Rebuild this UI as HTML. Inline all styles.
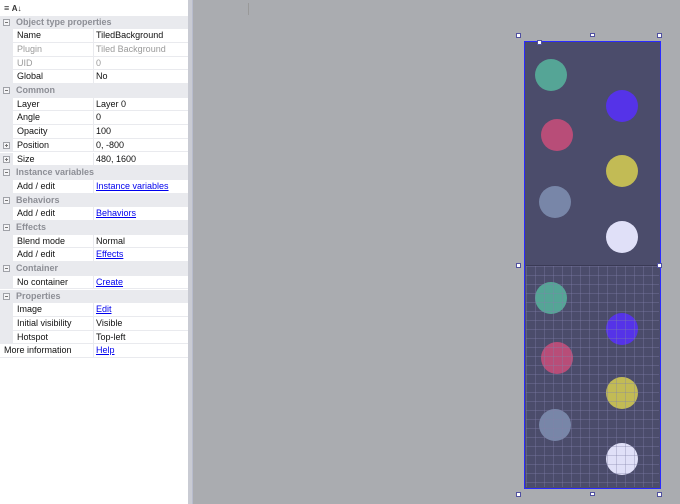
<!DOCTYPE html><html><head><style>
body{margin:0;width:680px;height:504px;overflow:hidden;background:#fff;font-family:"Liberation Sans",sans-serif;font-size:9px;position:relative}
#p{position:absolute;left:0;top:0;width:188px;height:504px;background:#fff}
.r{position:absolute;left:0;width:188px;height:13.7px;line-height:13.7px;box-sizing:border-box}
.h{background:#e9eaee;color:#8d8f96;font-weight:bold}
.h span{position:absolute;left:16px}
i{position:absolute;left:3px;top:3px;width:7px;height:7px;border:1px solid #a0a2a8;box-sizing:border-box;font-style:normal;z-index:2;background:#f4f4f6}
i:after{content:"";position:absolute;left:1px;top:2px;width:3px;height:1px;background:#777}
i.p:before{content:"";position:absolute;left:2px;top:1px;width:1px;height:3px;background:#777}
.n{background:#fff}
.n:before{content:"";position:absolute;left:0;top:0;width:13px;height:100%;background:#e9eaee}
.n .a{position:absolute;left:17px;color:#111}
.n .b{position:absolute;left:96px;color:#111}
.n{border-bottom:1px solid #e9eaee}
.n:after{content:"";position:absolute;left:93px;top:0;width:1px;height:100%;background:#e9eaee}
.g .a,.g .b{color:#9a9a9a}
a{color:#0000ee;text-decoration:underline}
.m:before{display:none}
.m .a{left:4px}
#c{position:absolute;left:192px;top:0;width:488px;height:504px;background:#aaacb0;border-left:1px solid #b8bccd;box-sizing:border-box}
#s{position:absolute;left:188px;top:0;width:4px;height:504px;background:#c9cbd3}
.hd{position:absolute;width:5px;height:5px;border:1px solid #5050a0;background:#fff;box-sizing:border-box}
.c{position:absolute;width:32px;height:32px;border-radius:50%}
</style></head><body>
<div id="p">
<div style="position:absolute;left:4px;top:3px;font-size:9px;color:#333">≡ <b style="font-size:8px">A↓</b></div>
<div class="r h" style="top:15.5px"><i></i><span>Object type properties</span></div>
<div class="r n" style="top:29.2px"><span class="a">Name</span><span class="b">TiledBackground</span></div>
<div class="r n g" style="top:42.9px"><span class="a">Plugin</span><span class="b">Tiled Background</span></div>
<div class="r n g" style="top:56.6px"><span class="a">UID</span><span class="b">0</span></div>
<div class="r n" style="top:70.3px"><span class="a">Global</span><span class="b">No</span></div>
<div class="r h" style="top:84px"><i></i><span>Common</span></div>
<div class="r n" style="top:97.7px"><span class="a">Layer</span><span class="b">Layer 0</span></div>
<div class="r n" style="top:111.4px"><span class="a">Angle</span><span class="b">0</span></div>
<div class="r n" style="top:125.1px"><span class="a">Opacity</span><span class="b">100</span></div>
<div class="r n" style="top:138.8px"><i class="p"></i><span class="a">Position</span><span class="b">0, -800</span></div>
<div class="r n" style="top:152.5px"><i class="p"></i><span class="a">Size</span><span class="b">480, 1600</span></div>
<div class="r h" style="top:166.2px"><i></i><span>Instance variables</span></div>
<div class="r n" style="top:179.9px"><span class="a">Add / edit</span><span class="b"><a>Instance variables</a></span></div>
<div class="r h" style="top:193.6px"><i></i><span>Behaviors</span></div>
<div class="r n" style="top:207.3px"><span class="a">Add / edit</span><span class="b"><a>Behaviors</a></span></div>
<div class="r h" style="top:221px"><i></i><span>Effects</span></div>
<div class="r n" style="top:234.7px"><span class="a">Blend mode</span><span class="b">Normal</span></div>
<div class="r n" style="top:248.4px"><span class="a">Add / edit</span><span class="b"><a>Effects</a></span></div>
<div class="r h" style="top:262.1px"><i></i><span>Container</span></div>
<div class="r n" style="top:275.8px"><span class="a">No container</span><span class="b"><a>Create</a></span></div>
<div class="r h" style="top:289.5px"><i></i><span>Properties</span></div>
<div class="r n" style="top:303.2px"><span class="a">Image</span><span class="b"><a>Edit</a></span></div>
<div class="r n" style="top:316.9px"><span class="a">Initial visibility</span><span class="b">Visible</span></div>
<div class="r n" style="top:330.6px"><span class="a">Hotspot</span><span class="b">Top-left</span></div>
<div class="r n m" style="top:344.3px"><span class="a">More information</span><span class="b"><a>Help</a></span></div>
</div>
<div id="s"></div>
<div id="c"><div style="position:absolute;left:55px;top:3px;width:1px;height:12px;background:#999"></div></div>
<div style="position:absolute;left:525px;top:42px;width:135px;height:446px;background:#4b4c6b"></div>
<div class="c" style="left:535px;top:59px;background:#55a596"></div>
<div class="c" style="left:606px;top:90px;background:#5533e8"></div>
<div class="c" style="left:541px;top:119px;background:#b84d78"></div>
<div class="c" style="left:606px;top:155px;background:#c2bb55"></div>
<div class="c" style="left:539px;top:186px;background:#7886a8"></div>
<div class="c" style="left:606px;top:221px;background:#e0e0f8"></div>
<div class="c" style="left:535px;top:282px;background:#55a596"></div>
<div class="c" style="left:606px;top:313px;background:#5533e8"></div>
<div class="c" style="left:541px;top:342px;background:#b84d78"></div>
<div class="c" style="left:606px;top:377px;background:#c2bb55"></div>
<div class="c" style="left:539px;top:409px;background:#7886a8"></div>
<div class="c" style="left:606px;top:443px;background:#e0e0f8"></div>
<div style="position:absolute;left:526px;top:265px;width:133px;height:222px;background-image:linear-gradient(90deg,rgba(130,130,170,.35) 1px,transparent 1px),linear-gradient(rgba(130,130,170,.35) 1px,transparent 1px);background-size:9px 9px;border-top:1px solid #3a3a55;box-sizing:border-box"></div>
<div style="position:absolute;left:524px;top:41px;width:137px;height:448px;border:1.5px solid #2a2aff;box-sizing:border-box"></div>
<div class="hd" style="left:516px;top:33px"></div>
<div class="hd" style="left:537px;top:40px"></div>
<div class="hd" style="left:590px;top:33px;height:4px"></div>
<div class="hd" style="left:657px;top:33px"></div>
<div class="hd" style="left:516px;top:263px"></div>
<div class="hd" style="left:657px;top:263px"></div>
<div class="hd" style="left:516px;top:492px"></div>
<div class="hd" style="left:590px;top:492px;height:4px"></div>
<div class="hd" style="left:657px;top:492px"></div>
</body></html>
